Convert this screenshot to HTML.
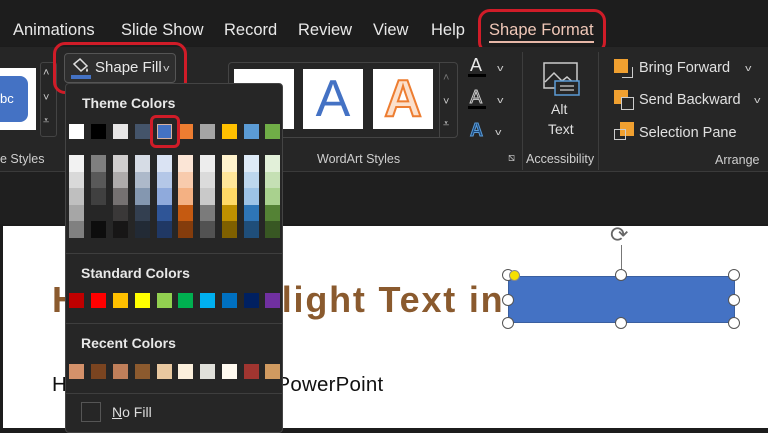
<!DOCTYPE html>
<html><head><meta charset="utf-8"><style>
*{margin:0;padding:0;box-sizing:border-box}
body{width:768px;height:428px;overflow:hidden;background:#1c1c1c;position:relative;font-family:"Liberation Sans",sans-serif;color:#e6e6e6}
.a{position:absolute}
.t{font-size:16.5px;color:#e8e8e8;top:21px;white-space:nowrap}
.sw{position:absolute;width:15px;height:15px}
.lbl{font-size:12.5px;color:#cfcfcf;white-space:nowrap}
.hd{font-size:14px;font-weight:bold;color:#e8e8e8}
.sep{position:absolute;left:66px;width:216px;height:1px;background:#3e3e3e}
.h{position:absolute;width:12px;height:12px;border-radius:50%;background:#fff;border:1.5px solid #555}
.cv{position:absolute;font-size:9px;color:#ccc;transform:scaleX(1.4)}
</style></head><body>
<div class="a" style="left:0;top:0;width:768px;height:46px;background:#1d1d1d"></div>
<div class="a t" style="left:13px">Animations</div>
<div class="a t" style="left:121px">Slide Show</div>
<div class="a t" style="left:224px">Record</div>
<div class="a t" style="left:298px">Review</div>
<div class="a t" style="left:373px">View</div>
<div class="a t" style="left:431px">Help</div>
<div class="a t" style="left:489px;color:#f0c8b8">Shape Format</div>
<div class="a" style="left:489px;top:41px;width:105px;height:2px;background:#e8b8a8"></div>
<div class="a" style="left:478px;top:9px;width:128px;height:45px;border:3px solid #d01c28;border-radius:12px"></div>
<div class="a" style="left:0;top:47px;width:768px;height:125px;background:#262626;border-bottom:1px solid #3a3a3a"></div>
<div class="a" style="left:0;top:172px;width:768px;height:52px;background:#1f1f1f"></div>
<div class="a" style="left:0;top:68px;width:36px;height:62px;background:#fff"></div>
<div class="a" style="left:0;top:76px;width:28px;height:46px;background:#4472c4;border-radius:0 8px 8px 0;color:#fff;font-size:13px;padding:15px 0 0 0">bc</div>
<div class="a" style="left:40px;top:62px;width:17px;height:75px;border:1px solid #444;border-radius:3px"></div>
<div class="a lbl" style="left:43px;top:67px;font-size:11px">˄</div>
<div class="a lbl" style="left:43px;top:92px;font-size:11px">˅</div>
<div class="a lbl" style="left:43px;top:115px;font-size:11px">⩡</div>
<div class="a lbl" style="left:0;top:152px">e Styles</div>
<div class="a" style="left:64px;top:53px;width:112px;height:30px;border:1px solid #555;border-radius:4px;background:#2e2e2e"></div>
<svg class="a" style="left:70px;top:56px" width="22" height="24" viewBox="0 0 22 24"><path d="M4 8 L10 3 L17 10 L11 15 Z" fill="none" stroke="#ddd" stroke-width="1.5"/><path d="M17 12 q2 3 0 4 q-2 -1 0 -4" fill="#ddd"/><rect x="1" y="19" width="20" height="4" fill="#4472c4"/></svg>
<div class="a" style="left:95px;top:59px;font-size:15px;color:#e8e8e8">Shape Fill</div>
<div class="cv" style="left:164px;top:63px">v</div>
<div class="a" style="left:53px;top:42px;width:134px;height:52px;border:3px solid #d01c28;border-radius:12px"></div>
<div class="a" style="left:228px;top:62px;width:230px;height:76px;border:1px solid #444;border-radius:4px"></div>
<div class="a" style="left:234px;top:69px;width:60px;height:60px;background:#fff"></div>
<div class="a" style="left:303px;top:69px;width:60px;height:60px;background:#fff;color:#4472c4;font-size:52px;text-align:center;line-height:60px">A</div>
<div class="a" style="left:373px;top:69px;width:60px;height:60px;background:#fff;color:#fbe0cc;font-size:52px;font-weight:bold;text-align:center;line-height:60px;-webkit-text-stroke:2px #ed7d31">A</div>
<div class="a" style="left:439px;top:62px;width:1px;height:76px;background:#444"></div>
<div class="a lbl" style="left:443px;top:72px;font-size:11px;color:#777">˄</div>
<div class="a lbl" style="left:443px;top:96px;font-size:11px">˅</div>
<div class="a lbl" style="left:443px;top:118px;font-size:11px">⩡</div>
<div class="a" style="left:470px;top:55px;font-size:18px;color:#e8e8e8">A</div>
<div class="a" style="left:468px;top:74px;width:18px;height:3px;background:#000"></div>
<div class="a" style="left:470px;top:87px;font-size:18px;color:#2a2a2a;-webkit-text-stroke:1px #ccc">A</div>
<div class="a" style="left:468px;top:106px;width:18px;height:3px;background:#000"></div>
<div class="a" style="left:470px;top:120px;font-size:18px;font-weight:bold;color:#1a4a80;-webkit-text-stroke:1px #5b9bd5">A</div>
<div class="cv" style="left:498px;top:63px">v</div>
<div class="cv" style="left:498px;top:95px">v</div>
<div class="cv" style="left:496px;top:127px">v</div>
<div class="a lbl" style="left:317px;top:152px">WordArt Styles</div>
<div class="a lbl" style="left:508px;top:152px;font-size:11px">⧅</div>
<div class="a" style="left:522px;top:52px;width:1px;height:118px;background:#3d3d3d"></div>
<svg class="a" style="left:542px;top:62px" width="40" height="36" viewBox="0 0 40 36"><rect x="2" y="1" width="33" height="25" fill="none" stroke="#ccc" stroke-width="1.5"/><path d="M3 20 l9-9 8 8 5-4 9 8" fill="none" stroke="#ccc" stroke-width="1.5"/><rect x="13" y="19" width="24" height="14" fill="#262626" stroke="#5b9bd5" stroke-width="1.5"/><path d="M18 24h14M18 28h14" stroke="#ccc" stroke-width="1.3"/></svg>
<div class="a" style="left:551px;top:101px;font-size:14px;color:#e0e0e0">Alt</div>
<div class="a" style="left:548px;top:121px;font-size:14px;color:#e0e0e0">Text</div>
<div class="a lbl" style="left:526px;top:152px">Accessibility</div>
<div class="a" style="left:598px;top:52px;width:1px;height:118px;background:#3d3d3d"></div>
<div class="a" style="left:614px;top:59px;width:14px;height:14px;background:#f0a030"></div>
<div class="a" style="left:622px;top:67px;width:11px;height:11px;border:1.5px solid #ccc;border-top:none;border-left:none"></div>
<div class="a" style="left:639px;top:60px;font-size:14.5px;color:#e0e0e0">Bring Forward</div>
<div class="cv" style="left:746px;top:63px">v</div>
<div class="a" style="left:614px;top:90px;width:14px;height:14px;background:#f0a030"></div>
<div class="a" style="left:621px;top:97px;width:13px;height:13px;border:1.5px solid #ccc;background:#262626"></div>
<div class="a" style="left:639px;top:92px;font-size:14.5px;color:#e0e0e0">Send Backward</div>
<div class="cv" style="left:755px;top:95px">v</div>
<div class="a" style="left:620px;top:122px;width:14px;height:14px;background:#f0a030"></div>
<div class="a" style="left:614px;top:129px;width:12px;height:11px;border:1.5px solid #ccc"></div>
<div class="a" style="left:639px;top:125px;font-size:14.5px;color:#e0e0e0">Selection Pane</div>
<div class="a lbl" style="left:715px;top:153px">Arrange</div>
<div class="a" style="left:3px;top:226px;width:765px;height:202px;background:#fff"></div>
<div class="a" style="left:52px;top:279px;font-size:36px;letter-spacing:1.8px;font-weight:bold;color:#8a5a2e;white-space:nowrap">How to Highlight Text in</div>
<div class="a" style="left:52px;top:373px;font-size:20.5px;letter-spacing:0.2px;color:#111;white-space:nowrap">How to Highlight Text in PowerPoint</div>
<div class="a" style="left:508px;top:276px;width:227px;height:47px;background:#4472c4;border:1px solid #3a5fa0"></div>
<div class="a" style="left:621px;top:245px;width:1px;height:30px;background:#777"></div>
<div class="a" style="left:610px;top:222px;font-size:22px;color:#666">⟳</div>
<div class="h" style="left:502px;top:269px"></div><div class="h" style="left:615px;top:269px"></div><div class="h" style="left:728px;top:269px"></div>
<div class="h" style="left:502px;top:294px"></div><div class="h" style="left:728px;top:294px"></div>
<div class="h" style="left:502px;top:317px"></div><div class="h" style="left:615px;top:317px"></div><div class="h" style="left:728px;top:317px"></div>
<div class="a" style="left:509px;top:270px;width:11px;height:11px;border-radius:50%;background:#f5e000;border:1px solid #888"></div>
<div class="a" style="left:65px;top:83px;width:218px;height:350px;background:#262626;border:1px solid #444;border-radius:4px"></div>
<div class="a hd" style="left:82px;top:95px">Theme Colors</div>
<div id="sw"></div>
<div class="sep" style="top:253px"></div>
<div class="a hd" style="left:81px;top:265px">Standard Colors</div>
<div class="sep" style="top:323px"></div>
<div class="a hd" style="left:81px;top:335px">Recent Colors</div>
<div class="sep" style="top:393px"></div>
<div class="a" style="left:81px;top:402px;width:20px;height:20px;border:1px solid #555"></div>
<div class="a" style="left:112px;top:404px;font-size:14px;color:#ddd"><u>N</u>o Fill</div>
<div class="a" style="left:150px;top:115px;width:30px;height:33px;border:3px solid #d01c28;border-radius:6px"></div>
<script>
var xs=[69,91,113,135,157,178,200,222,244,265];
var tc=["#fff","#000","#e7e6e6","#44546a","#4472c4","#ed7d31","#a5a5a5","#ffc000","#5b9bd5","#70ad47"];
var sh=[["#f2f2f2","#d9d9d9","#bfbfbf","#a6a6a6","#808080"],["#7f7f7f","#595959","#404040","#262626","#0d0d0d"],["#d0cece","#aeabab","#757171","#3a3838","#171616"],["#d6dce5","#adb9ca","#8497b0","#333f50","#222a35"],["#dae3f3","#b4c7e7","#8faadc","#2f5597","#203864"],["#fbe5d6","#f8cbad","#f4b183","#c55a11","#843c0c"],["#ededed","#dbdbdb","#c9c9c9","#7b7b7b","#525252"],["#fff2cc","#ffe699","#ffd966","#bf9000","#7f6000"],["#deebf7","#bdd7ee","#9dc3e6","#2e75b6","#1f4e79"],["#e2f0d9","#c5e0b4","#a9d18e","#548235","#385723"]];
var std=["#c00000","#ff0000","#ffc000","#ffff00","#92d050","#00b050","#00b0f0","#0070c0","#002060","#7030a0"];
var rec=["#d4916a","#7a4420","#c07f5a","#8c5a2e","#e8c8a0","#fbefdc","#e0e0da","#fffaf0","#a03530","#d09a60"];
var h="";
for(var i=0;i<10;i++){
h+='<div class="sw" style="left:'+xs[i]+'px;top:124px;background:'+tc[i]+(i==4?';border:1.5px solid #d8b0a0':'')+'"></div>';
for(var j=0;j<5;j++)h+='<div class="sw" style="left:'+xs[i]+'px;top:'+(155+j*16.6)+'px;height:16.6px;background:'+sh[i][j]+'"></div>';
h+='<div class="sw" style="left:'+xs[i]+'px;top:293px;background:'+std[i]+'"></div>';
h+='<div class="sw" style="left:'+xs[i]+'px;top:364px;background:'+rec[i]+'"></div>';
}
document.getElementById("sw").innerHTML=h;
</script>
</body></html>
